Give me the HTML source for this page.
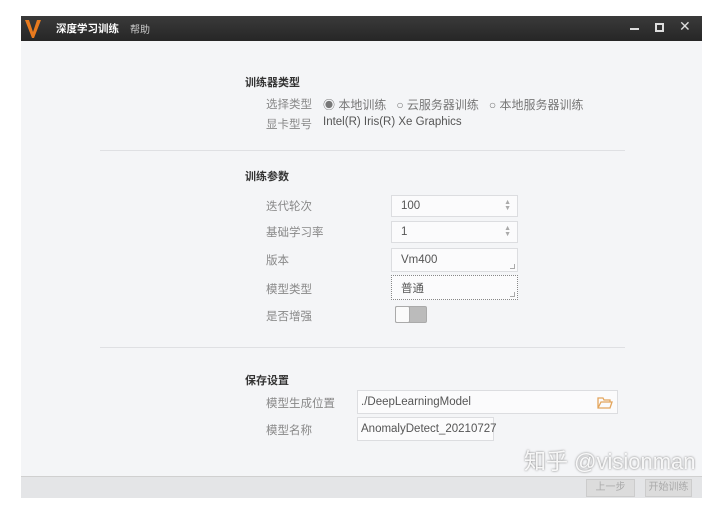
<!DOCTYPE html>
<html><head><meta charset="utf-8"><style>
*{margin:0;padding:0;box-sizing:border-box}
body{width:717px;height:508px;background:#fff;position:relative;overflow:hidden;font-family:"Liberation Sans","Noto Sans CJK SC",sans-serif;font-size:11px;color:#666}
.a{position:absolute;white-space:nowrap}
#win{position:absolute;left:21px;top:16px;width:681px;height:482px;background:#f4f5f7}
#tb{position:absolute;left:21px;top:16px;width:681px;height:25px;background:linear-gradient(#3a3a3a,#262626)}
.h{font-weight:bold;color:#333;font-size:11px}
.l{color:#888;font-size:11.5px}
.box{position:absolute;background:#fbfbfc;border:1px solid #dcdde0;color:#555;padding-left:9px;font-size:11.5px;display:flex;align-items:center}
.sep{position:absolute;left:100px;width:525px;height:1px;background:#dfe0e3}
.rz{position:absolute;right:2px;bottom:2px;width:5px;height:5px;border-right:1px solid #aaa;border-bottom:1px solid #aaa}
.sp{position:absolute;right:6px;top:4px;color:#aaa;font-size:7px;line-height:6px}
.btn{position:absolute;top:479px;height:18px;background:#dcdcdc;border:1px solid #ccc;color:#aaa;font-size:10px;text-align:center;line-height:16px}
</style></head><body>
<div id="win"></div>
<div id="tb"></div>
<svg class="a" style="left:22px;top:17px" width="22" height="24" viewBox="0 0 22 24"><path d="M3 3 L10 21 L12 21 L19 3 L15 3 L11 15 L7 3Z" fill="#e87a1e"/></svg>
<div class="a" style="left:56px;top:21px;color:#fff;font-weight:bold;font-size:10.5px">深度学习训练</div>
<div class="a" style="left:130px;top:21px;color:#ccc;font-size:10px">帮助</div>
<div class="a" style="left:630px;top:28px;width:9px;height:2px;background:#ddd"></div>
<div class="a" style="left:655px;top:23px;width:9px;height:9px;border:2px solid #ddd"></div>
<div class="a" style="left:679px;top:18px;color:#ddd;font-size:14px">✕</div>

<div class="a h" style="left:245px;top:74px">训练器类型</div>
<div class="a l" style="left:266px;top:96px">选择类型</div>
<div class="a" style="left:323px;top:96px;color:#777;font-size:12px">◉ 本地训练 &nbsp;&nbsp;○ 云服务器训练 &nbsp;&nbsp;○ 本地服务器训练</div>
<div class="a l" style="left:266px;top:116px">显卡型号</div>
<div class="a" style="left:323px;top:116px;color:#555;font-size:11.5px">Intel(R) Iris(R) Xe Graphics</div>
<div class="sep" style="top:150px"></div>

<div class="a h" style="left:245px;top:168px">训练参数</div>
<div class="a l" style="left:266px;top:198px">迭代轮次</div>
<div class="box" style="left:391px;top:195px;width:127px;height:22px">100<span class="sp">▲<br>▼</span></div>
<div class="a l" style="left:266px;top:224px">基础学习率</div>
<div class="box" style="left:391px;top:221px;width:127px;height:22px">1<span class="sp">▲<br>▼</span></div>
<div class="a l" style="left:266px;top:252px">版本</div>
<div class="box" style="left:391px;top:248px;width:127px;height:24px">Vm400<span class="rz"></span></div>
<div class="a l" style="left:266px;top:281px">模型类型</div>
<div class="box" style="left:391px;top:275px;width:127px;height:25px;border:1px dotted #888">普通<span class="rz"></span></div>
<div class="a l" style="left:266px;top:308px">是否增强</div>
<div class="a" style="left:395px;top:306px;width:32px;height:17px;background:#bbb;border:1px solid #aaa;border-radius:2px"></div>
<div class="a" style="left:395px;top:306px;width:15px;height:17px;background:#fafafa;border:1px solid #aaa;border-radius:2px"></div>
<div class="sep" style="top:347px"></div>

<div class="a h" style="left:245px;top:372px">保存设置</div>
<div class="a l" style="left:266px;top:395px">模型生成位置</div>
<div class="box" style="left:357px;top:390px;width:261px;height:24px;padding-left:3px">./DeepLearningModel</div>
<svg class="a" style="left:597px;top:396px" width="16" height="13" viewBox="0 0 16 13"><path d="M1 2h5l1 2h6v2H4L1 12Z M1 2v10h12l2-6H4" fill="none" stroke="#e3a55c" stroke-width="1.3"/></svg>
<div class="a l" style="left:266px;top:422px">模型名称</div>
<div class="box" style="left:357px;top:417px;width:137px;height:24px;padding-left:3px">AnomalyDetect_20210727</div>

<div class="a" style="left:21px;top:476px;width:681px;height:22px;background:#e4e5e7;border-top:1px solid #d0d0d0"></div>
<div class="btn" style="left:586px;width:49px">上一步</div>
<div class="btn" style="left:645px;width:47px">开始训练</div>
<div class="a" style="left:524px;top:444px;color:rgba(255,255,255,0.9);font-size:22px;text-shadow:0 0 2px #777">知乎 @visionman</div>
</body></html>
